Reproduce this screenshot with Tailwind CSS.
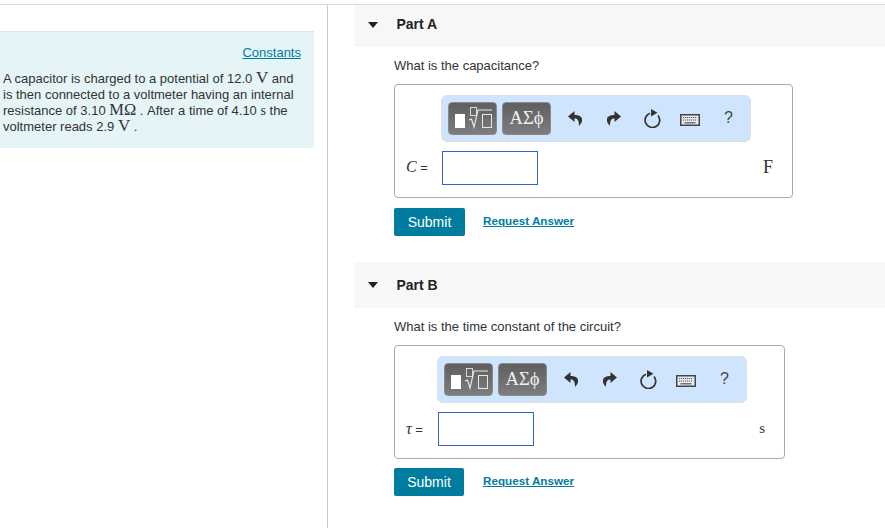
<!DOCTYPE html>
<html>
<head>
<meta charset="utf-8">
<script src="https://cdn.jsdelivr.net/npm/@tailwindcss/browser@4"></script>
</head>
<body class="bg-white font-['Liberation_Sans',Arial,sans-serif] text-[13px] text-[#333]">
<div class="w-[885px] h-[528px] overflow-hidden pt-[4px]">
  <div class="flex h-[524px] border-t border-[#dddddd]">
    <!-- left -->
    <div class="w-[328px] shrink-0 border-r border-[#c8ccd0] pt-[26px]">
      <div class="w-[314px] h-[117px] bg-[#e5f5f7] border-t border-[#dde6e8] pl-[3px] pr-[13px] pt-[13px]">
        <div class="text-right leading-[16px]"><a class="text-[#007c9e] underline">Constants</a></div>
        <p class="mt-[10px] leading-[16px] text-[#333] whitespace-nowrap">A capacitor is charged to a potential of 12.0 <span class="font-['Liberation_Serif',serif] text-[17px] leading-[0]">V</span> and<br>is then connected to a voltmeter having an internal<br>resistance of 3.10 <span class="font-['Liberation_Serif',serif] text-[16.500px] leading-[0]">MΩ</span> . After a time of 4.10 <span class="font-['Liberation_Serif',serif] text-[14px] leading-[0]">s</span> the<br>voltmeter reads 2.9 <span class="font-['Liberation_Serif',serif] text-[17px] leading-[0]">V</span> .</p>
      </div>
    </div>
    <!-- right -->
    <div class="flex-1 pl-[26px]">
      <!-- Part A -->
      <div class="h-[42px] bg-[#f7f7f7] flex items-center pl-[14px]">
        <svg width="10" height="6" viewBox="0 0 10 6" class="mr-[18.500px] -mt-[3px]"><path d="M0 0H10L5 6Z" fill="#222"/></svg>
        <span class="font-bold text-[14px] text-[#222] leading-none -mt-[4px]">Part A</span>
      </div>
      <div class="pl-[40px]">
        <p class="mt-[11px] h-[16px] leading-[16px] text-[#333]">What is the capacitance?</p>
        <div class="mt-[10px] w-[399px] h-[114px] border border-[#aaaaaa] rounded-[4px] pt-[10px] relative">
          <div class="ml-[46px] w-[310px] h-[47px] bg-[#cfe5fd] rounded-[6px] border border-[#dcdfe3] flex items-center pl-[6px]">
            <div class="w-[49px] h-[33px] rounded-[4px] bg-gradient-to-b from-[#5f5f5f] to-[#7d7d7d] border border-[#8a8a8a] mr-[5px] shrink-0">
              <svg width="47" height="31" viewBox="1 1 47 31" fill="none" class="block"><rect x="7" y="12" width="10" height="14" fill="#fff"/><rect x="22.500" y="5.500" width="6" height="8" stroke="#d8d8d8"/><path d="M21 18l2.500-1 2.500 8 4-17h14" stroke="#e8e8e8" stroke-width="1.200"/><rect x="34.500" y="12.500" width="9" height="13" stroke="#e8e8e8"/></svg>
            </div>
            <div class="w-[49px] h-[33px] rounded-[4px] bg-gradient-to-b from-[#5f5f5f] to-[#7d7d7d] border border-[#8a8a8a] shrink-0 flex items-center justify-center text-[#f0f0f0] font-['Liberation_Serif',serif] text-[18.500px] leading-none">ΑΣϕ</div>
            <div class="flex items-center ml-[17px] text-[#333]">
              <svg width="14" height="15" viewBox="0 0 14 15" class="mr-[25px]"><path d="M6.500 0 0 5.500 6.500 11V7.500c3 0 4.500 1.500 4.500 7.500 2.500-3 3.500-4.500 3-7-.5-3-3.500-4-7.500-4Z" fill="#333"/></svg>
              <svg width="14" height="15" viewBox="0 0 14 15" class="mr-[23px]"><path d="M7.500 0 14 5.500 7.500 11V7.500c-3 0-4.500 1.500-4.500 7.500C.5 12-.5 10.500 0 8c.5-3 3.500-4 7.500-4Z" fill="#333"/></svg>
              <svg width="17" height="19" viewBox="0 0 17 19" class="mr-[19px]" fill="none"><path d="M6 4.300A7.300 7.300 0 1 0 14 6.500" stroke="#333" stroke-width="1.700"/><path d="M7 0 13.500 3.800 7 7.500Z" fill="#333"/></svg>
              <svg width="20" height="12" viewBox="0 0 20 12" class="mr-[24px] mt-[3px]" fill="none"><rect x="0.750" y="0.750" width="18.500" height="10.500" fill="#e6edf3" stroke="#444" stroke-width="1.500"/><path d="M3 3.500h14M3 6h14" stroke="#555" stroke-dasharray="1.200 .8"/><path d="M4.500 8.800h11" stroke="#555" stroke-width="1.200"/></svg>
              <span class="text-[#444] text-[16px] leading-none -mt-[1px]">?</span>
            </div>
          </div>
          <div class="flex items-center mt-[8px] h-[35px]">
            <span class="w-[47px] pl-[11px] shrink-0 text-[#333] -mt-[1px]"><span class="font-['Liberation_Serif',serif] italic text-[16px]">C</span> <span class="text-[13px]">=</span></span>
            <div class="w-[96px] h-[34px] border border-[#2f66c4] bg-white"></div>
            <span class="ml-auto mr-[19px] -mt-[1px] font-['Liberation_Serif',serif] text-[18px] leading-none text-[#333]">F</span>
          </div>
        </div>
        <div class="flex items-center mt-[10px] h-[28px]">
          <button class="w-[71px] h-[28px] bg-[#007c9e] rounded-[2px] text-white text-[14px]">Submit</button>
          <a class="ml-[18px] text-[#007c9e] underline font-semibold text-[11.700px] -mt-[3px]">Request Answer</a>
        </div>
      </div>
      <!-- Part B -->
      <div class="mt-[26px] h-[46px] bg-[#f7f7f7] flex items-center pl-[14px]">
        <svg width="10" height="6" viewBox="0 0 10 6" class="mr-[18.500px]"><path d="M0 0H10L5 6Z" fill="#222"/></svg>
        <span class="font-bold text-[14px] text-[#222] leading-none -mt-[1px]">Part B</span>
      </div>
      <div class="pl-[40px]">
        <p class="mt-[11px] h-[16px] leading-[16px] text-[#333]">What is the time constant of the circuit?</p>
        <div class="mt-[10px] w-[391px] h-[114px] border border-[#aaaaaa] rounded-[4px] pt-[10px] relative">
          <div class="ml-[42px] w-[310px] h-[47px] bg-[#cfe5fd] rounded-[6px] border border-[#dcdfe3] flex items-center pl-[6px]">
            <div class="w-[49px] h-[33px] rounded-[4px] bg-gradient-to-b from-[#5f5f5f] to-[#7d7d7d] border border-[#8a8a8a] mr-[5px] shrink-0">
              <svg width="47" height="31" viewBox="1 1 47 31" fill="none" class="block"><rect x="7" y="12" width="10" height="14" fill="#fff"/><rect x="22.500" y="5.500" width="6" height="8" stroke="#d8d8d8"/><path d="M21 18l2.500-1 2.500 8 4-17h14" stroke="#e8e8e8" stroke-width="1.200"/><rect x="34.500" y="12.500" width="9" height="13" stroke="#e8e8e8"/></svg>
            </div>
            <div class="w-[49px] h-[33px] rounded-[4px] bg-gradient-to-b from-[#5f5f5f] to-[#7d7d7d] border border-[#8a8a8a] shrink-0 flex items-center justify-center text-[#f0f0f0] font-['Liberation_Serif',serif] text-[18.500px] leading-none">ΑΣϕ</div>
            <div class="flex items-center ml-[17px] text-[#333]">
              <svg width="14" height="15" viewBox="0 0 14 15" class="mr-[25px]"><path d="M6.500 0 0 5.500 6.500 11V7.500c3 0 4.500 1.500 4.500 7.500 2.500-3 3.500-4.500 3-7-.5-3-3.500-4-7.500-4Z" fill="#333"/></svg>
              <svg width="14" height="15" viewBox="0 0 14 15" class="mr-[23px]"><path d="M7.500 0 14 5.500 7.500 11V7.500c-3 0-4.500 1.500-4.500 7.500C.5 12-.5 10.500 0 8c.5-3 3.500-4 7.500-4Z" fill="#333"/></svg>
              <svg width="17" height="19" viewBox="0 0 17 19" class="mr-[19px]" fill="none"><path d="M6 4.300A7.300 7.300 0 1 0 14 6.500" stroke="#333" stroke-width="1.700"/><path d="M7 0 13.500 3.800 7 7.500Z" fill="#333"/></svg>
              <svg width="20" height="12" viewBox="0 0 20 12" class="mr-[24px] mt-[3px]" fill="none"><rect x="0.750" y="0.750" width="18.500" height="10.500" fill="#e6edf3" stroke="#444" stroke-width="1.500"/><path d="M3 3.500h14M3 6h14" stroke="#555" stroke-dasharray="1.200 .8"/><path d="M4.500 8.800h11" stroke="#555" stroke-width="1.200"/></svg>
              <span class="text-[#444] text-[16px] leading-none -mt-[1px]">?</span>
            </div>
          </div>
          <div class="flex items-center mt-[8px] h-[35px]">
            <span class="w-[43px] pl-[11px] shrink-0 text-[#333]"><span class="font-['Liberation_Serif',serif] italic text-[16px]">τ</span> <span class="text-[13px]">=</span></span>
            <div class="w-[96px] h-[34px] border border-[#2f66c4] bg-white"></div>
            <span class="ml-auto mr-[19px] font-['Liberation_Serif',serif] text-[15px] leading-none text-[#333]">s</span>
          </div>
        </div>
        <div class="flex items-center mt-[9px] h-[28px]">
          <button class="w-[70px] h-[28px] bg-[#007c9e] rounded-[2px] text-white text-[14px]">Submit</button>
          <a class="ml-[19px] text-[#007c9e] underline font-semibold text-[11.700px] -mt-[3px]">Request Answer</a>
        </div>
      </div>
    </div>
  </div>
</div>
</body>
</html>
